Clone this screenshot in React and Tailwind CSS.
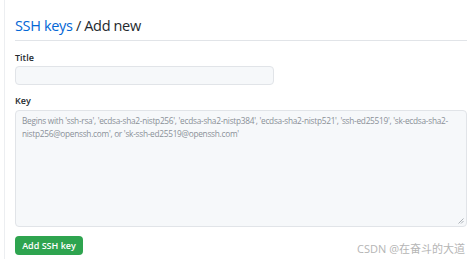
import React from 'react'

function App() {
  return (
    <div className="relative h-[259px] w-[474px] overflow-hidden bg-white" style={{ fontFamily: '"Open Sans", "Noto Sans CJK SC", sans-serif' }}>
      <div className="absolute left-[4px] top-0 h-full w-px bg-[#eceef1]" />
      <div className="pl-[15px] pr-[7px] pt-[16px]">
        <h2 className="border-b border-[#e1e4e8] pb-[4px] text-[14.5px] leading-[20px] tracking-[-0.35px] text-[#24292e]">
          <a className="text-[#0366d6]">SSH keys</a> / Add new
        </h2>
        <div className="mt-[11px]">
          <label className="block text-[9px] font-semibold leading-[12px] text-[#24292e]">Title</label>
          <div className="mt-[2px] h-[19px] w-[259px] rounded-[4px] border border-[#e1e4e8] bg-[#f6f8fa]" />
        </div>
        <div className="mt-[10px]">
          <label className="block text-[9px] font-semibold leading-[12px] text-[#24292e]">Key</label>
          <div className="relative mt-[3px] h-[117px] w-[452px] rounded-[4px] border border-[#e1e4e8] bg-[#f6f8fa] pl-[6px] pr-[3px] pt-[4px] text-[8.3px] leading-[12.5px] tracking-[-0.28px] text-[#8a9098]">
            Begins with 'ssh-rsa', 'ecdsa-sha2-nistp256', 'ecdsa-sha2-nistp384', 'ecdsa-sha2-nistp521', 'ssh-ed25519', 'sk-ecdsa-sha2-nistp256@openssh.com', or 'sk-ssh-ed25519@openssh.com'
            <svg className="absolute bottom-[2px] right-[2px]" width="6" height="6" viewBox="0 0 6 6">
              <path d="M5.5 0.5 L0.5 5.5 M5.5 3 L3 5.5" stroke="#9aa0a6" strokeWidth="0.8" />
            </svg>
          </div>
        </div>
        <div className="mt-[9px] flex items-center justify-between">
          <button className="h-[19px] w-[68px] rounded-[4px] bg-[#2ea44f] text-[9px] font-semibold text-white">Add SSH key</button>
          <span className="mr-[2px] mt-[6px] text-[11px] leading-[12px] text-[#b5b5b5]">CSDN @在奋斗的大道</span>
        </div>
      </div>
    </div>
  )
}

export default App
